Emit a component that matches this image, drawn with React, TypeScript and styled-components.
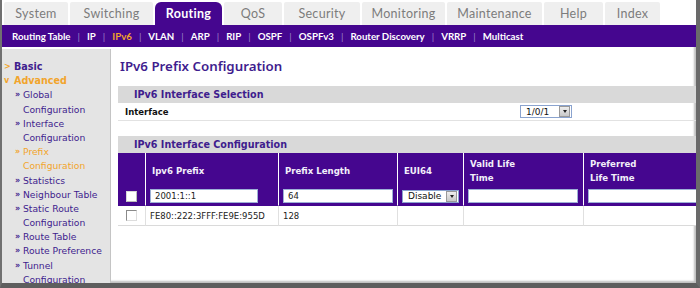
import styled, { createGlobalStyle } from 'styled-components';

const Global = createGlobalStyle`
  html, body { margin: 0; padding: 0; background: #fff; }
  * { box-sizing: border-box; }
`;

const PURPLE = '#45068f';
const TEXT_PURPLE = '#3f1d8e';
const ORANGE = '#f2a42c';

const Frame = styled.div`
  width: 700px;
  height: 288px;
  overflow: hidden;
  display: flex;
  flex-direction: column;
  background: #fff;
  border-left: 2px solid #707070;
  border-right: 4px solid #6a6a6a;
  border-bottom: 5px solid #5e5e5e;
  box-shadow: inset -2px -2px 2px rgba(0,0,0,0.25);
`;

const TabBar = styled.div`
  display: flex;
  height: 25px;
  padding-top: 2px;
  padding-left: 2px;
  background: #fff;
  flex-shrink: 0;
`;

const Tab = styled.div<{ $w: number; $active?: boolean }>`
  width: ${(p) => p.$w}px;
  margin-right: 2px;
  display: flex;
  align-items: center;
  justify-content: center;
  font-family: Lato, "Noto Sans", sans-serif;
  font-size: 12.5px;
  letter-spacing: 0.3px;
  color: ${(p) => (p.$active ? '#fff' : '#7c7c7c')};
  font-weight: ${(p) => (p.$active ? 700 : 400)};
  background: ${(p) => (p.$active ? PURPLE : '#efefef')};
  border-radius: ${(p) => (p.$active ? '6px 6px 0 0' : '2px 2px 0 0')};
`;

const SubNav = styled.div`
  height: 22px;
  flex-shrink: 0;
  background: ${PURPLE};
  display: flex;
  align-items: center;
  padding-left: 10px;
  font-family: Lato, "Noto Sans", sans-serif;
  font-weight: 700;
  font-size: 9.7px;
  color: #fff;
`;

const NavItem = styled.span<{ $active?: boolean }>`
  color: ${(p) => (p.$active ? ORANGE : '#fff')};
`;

const NavSep = styled.span`
  color: #9d86c8;
  font-weight: 400;
  margin: 0 7px;
`;

const Body = styled.div`
  flex: 1;
  display: flex;
  margin-top: 2px;
  min-height: 0;
`;

const Sidebar = styled.div`
  width: 109px;
  flex-shrink: 0;
  background: #e4e4e4;
  border-right: 1px solid #c4c4c4;
  padding-top: 11px;
  font-family: "DejaVu Sans", Verdana, sans-serif;
  font-size: 9.2px;
`;

const SideLine = styled.div<{ $indent: number; $orange?: boolean; $bold?: boolean }>`
  height: 14.2px;
  line-height: 14.2px;
  padding-left: ${(p) => p.$indent}px;
  color: ${(p) => (p.$orange ? ORANGE : TEXT_PURPLE)};
  font-weight: ${(p) => (p.$bold ? 700 : 400)};
  font-size: ${(p) => (p.$bold ? 9.6 : 9.2)}px;
  white-space: nowrap;
  position: relative;
`;

const Bullet = styled.span<{ $top?: boolean; $orange?: boolean }>`
  position: absolute;
  left: ${(p) => (p.$top ? 2 : 13)}px;
  color: ${(p) => (p.$orange ? ORANGE : TEXT_PURPLE)};
  font-weight: 700;
  font-size: 8px;
`;

const Main = styled.div`
  flex: 1;
  padding-left: 7px;
  overflow: hidden;
  font-family: "DejaVu Sans", Verdana, sans-serif;
`;

const Title = styled.h1`
  margin: 0;
  height: 35px;
  padding: 8px 0 0 2px;
  font-family: "Noto Sans", sans-serif;
  font-size: 13.3px;
  font-weight: 600;
  color: ${TEXT_PURPLE};
`;

const Section = styled.div<{ $gap?: number }>`
  margin-top: ${(p) => p.$gap ?? 0}px;
  width: 600px;
`;

const SectionHead = styled.div`
  height: 17px;
  background: #d9d9d9;
  display: flex;
  align-items: center;
  padding-left: 6px;
  font-size: 9.6px;
  font-weight: 700;
  color: ${TEXT_PURPLE};
`;

const Dots = styled.span`
  width: 4px;
  height: 7px;
  margin-right: 6px;
  background-image: radial-gradient(circle, #f4f4f4 40%, transparent 45%);
  background-size: 2px 2px;
`;

const FieldRow = styled.div`
  height: 18px;
  display: flex;
  align-items: center;
  border-bottom: 1px solid #e2e2e2;
  padding-left: 7px;
  font-size: 8.5px;
  font-weight: 700;
  color: #111;
`;

const FieldLabel = styled.div`
  width: 395px;
`;

const SelectBox = styled.div<{ $w: number }>`
  width: ${(p) => p.$w}px;
  height: 13px;
  display: flex;
  align-items: center;
  background: #fff;
  border: 1px solid #8aa3cf;
  font-size: 9px;
  font-weight: 400;
  color: #111;
`;

const SelectText = styled.span`
  flex: 1;
  padding-left: 5px;
`;

const SelectBtn = styled.span`
  width: 11px;
  height: 11px;
  margin-right: 1px;
  background: linear-gradient(#eeeeee, #c8c8c8);
  border: 1px solid #999;
  display: flex;
  align-items: center;
  justify-content: center;
  &::after {
    content: '';
    border-left: 2.5px solid transparent;
    border-right: 2.5px solid transparent;
    border-top: 3px solid #222;
  }
`;

const Table = styled.div`
  display: grid;
  grid-template-columns: 27px 133px 119px 66px 120px 135px;
`;

const HeadCell = styled.div`
  height: 34px;
  background: ${PURPLE};
  border-left: 1px solid #fff;
  &:first-child { border-left: none; }
  padding: 2px 0 0 6px;
  display: flex;
  align-items: center;
  font-size: 8.6px;
  font-weight: 700;
  line-height: 14px;
  color: #f2effa;
`;

const Cell = styled.div<{ $purple?: boolean }>`
  height: ${(p) => (p.$purple ? 19 : 20)}px;
  background: ${(p) => (p.$purple ? PURPLE : '#fff')};
  border-left: 1px solid ${(p) => (p.$purple ? '#fff' : '#e0e0e0')};
  border-bottom: 1px solid ${(p) => (p.$purple ? PURPLE : '#dadada')};
  &:nth-child(6n + 1) { border-left: none; justify-content: center; }
  display: flex;
  align-items: center;
  padding: 0 4px;
  font-size: 8.5px;
  color: #222;
  white-space: nowrap;
`;

const Check = styled.span<{ $filled?: boolean }>`
  width: 11px;
  height: 11px;
  background: #fff;
  border: 1px solid ${(p) => (p.$filled ? '#d8d8d8' : '#8a8a8a')};
  border-right-color: ${(p) => (p.$filled ? '#bbb' : '#ddd')};
  border-bottom-color: ${(p) => (p.$filled ? '#bbb' : '#ddd')};
`;

const TextInput = styled.div<{ $w: number }>`
  width: ${(p) => p.$w}px;
  height: 14px;
  background: #fff;
  border: 1px solid #9db1d6;
  padding-left: 4px;
  display: flex;
  align-items: center;
  font-size: 8.5px;
  color: #222;
`;

const tabs: [string, number, boolean?][] = [
  ['System', 64],
  ['Switching', 83],
  ['Routing', 67, true],
  ['QoS', 58],
  ['Security', 76],
  ['Monitoring', 83],
  ['Maintenance', 95],
  ['Help', 59],
  ['Index', 55],
];

const navItems = ['Routing Table', 'IP', 'IPv6', 'VLAN', 'ARP', 'RIP', 'OSPF', 'OSPFv3', 'Router Discovery', 'VRRP', 'Multicast'];

type Side = { text: string; indent: number; bullet?: 'sub' | 'open' | 'closed'; orange?: boolean; bold?: boolean };

const side: Side[] = [
  { text: 'Basic', indent: 12, bullet: 'closed', bold: true },
  { text: 'Advanced', indent: 12, bullet: 'open', bold: true, orange: true },
  { text: 'Global', indent: 21, bullet: 'sub' },
  { text: 'Configuration', indent: 21 },
  { text: 'Interface', indent: 21, bullet: 'sub' },
  { text: 'Configuration', indent: 21 },
  { text: 'Prefix', indent: 21, bullet: 'sub', orange: true },
  { text: 'Configuration', indent: 21, orange: true },
  { text: 'Statistics', indent: 21, bullet: 'sub' },
  { text: 'Neighbour Table', indent: 21, bullet: 'sub' },
  { text: 'Static Route', indent: 21, bullet: 'sub' },
  { text: 'Configuration', indent: 21 },
  { text: 'Route Table', indent: 21, bullet: 'sub' },
  { text: 'Route Preference', indent: 21, bullet: 'sub' },
  { text: 'Tunnel', indent: 21, bullet: 'sub' },
  { text: 'Configuration', indent: 21 },
];

export default function App() {
  return (
    <>
      <Global />
      <Frame>
        <TabBar>
          {tabs.map(([label, w, active]) => (
            <Tab key={label} $w={w} $active={active}>{label}</Tab>
          ))}
        </TabBar>
        <SubNav>
          {navItems.map((item, i) => (
            <span key={item}>
              {i > 0 && <NavSep>|</NavSep>}
              <NavItem $active={item === 'IPv6'}>{item}</NavItem>
            </span>
          ))}
        </SubNav>
        <Body>
          <Sidebar>
            {side.map((s, i) => (
              <SideLine key={i} $indent={s.indent} $orange={s.orange} $bold={s.bold}>
                {s.bullet === 'sub' && <Bullet $orange={s.orange}>»</Bullet>}
                {s.bullet === 'closed' && <Bullet $top $orange>&gt;</Bullet>}
                {s.bullet === 'open' && <Bullet $top $orange>v</Bullet>}
                {s.text}
              </SideLine>
            ))}
          </Sidebar>
          <Main>
            <Title>IPv6 Prefix Configuration</Title>
            <Section $gap={2}>
              <SectionHead><Dots />IPv6 Interface Selection</SectionHead>
              <FieldRow>
                <FieldLabel>Interface</FieldLabel>
                <SelectBox $w={52}>
                  <SelectText>1/0/1</SelectText>
                  <SelectBtn />
                </SelectBox>
              </FieldRow>
            </Section>
            <Section $gap={15}>
              <SectionHead><Dots />IPv6 Interface Configuration</SectionHead>
              <Table>
                <HeadCell />
                <HeadCell>Ipv6 Prefix</HeadCell>
                <HeadCell>Prefix Length</HeadCell>
                <HeadCell>EUI64</HeadCell>
                <HeadCell>Valid Life<br />Time</HeadCell>
                <HeadCell>Preferred<br />Life Time</HeadCell>

                <Cell $purple><Check $filled /></Cell>
                <Cell $purple><TextInput $w={108}>2001:1::1</TextInput></Cell>
                <Cell $purple><TextInput $w={111}>64</TextInput></Cell>
                <Cell $purple>
                  <SelectBox $w={58}>
                    <SelectText>Disable</SelectText>
                    <SelectBtn />
                  </SelectBox>
                </Cell>
                <Cell $purple><TextInput $w={110} /></Cell>
                <Cell $purple><TextInput $w={120} /></Cell>

                <Cell><Check /></Cell>
                <Cell>FE80::222:3FFF:FE9E:955D</Cell>
                <Cell>128</Cell>
                <Cell />
                <Cell />
                <Cell />
              </Table>
            </Section>
          </Main>
        </Body>
      </Frame>
    </>
  );
}
